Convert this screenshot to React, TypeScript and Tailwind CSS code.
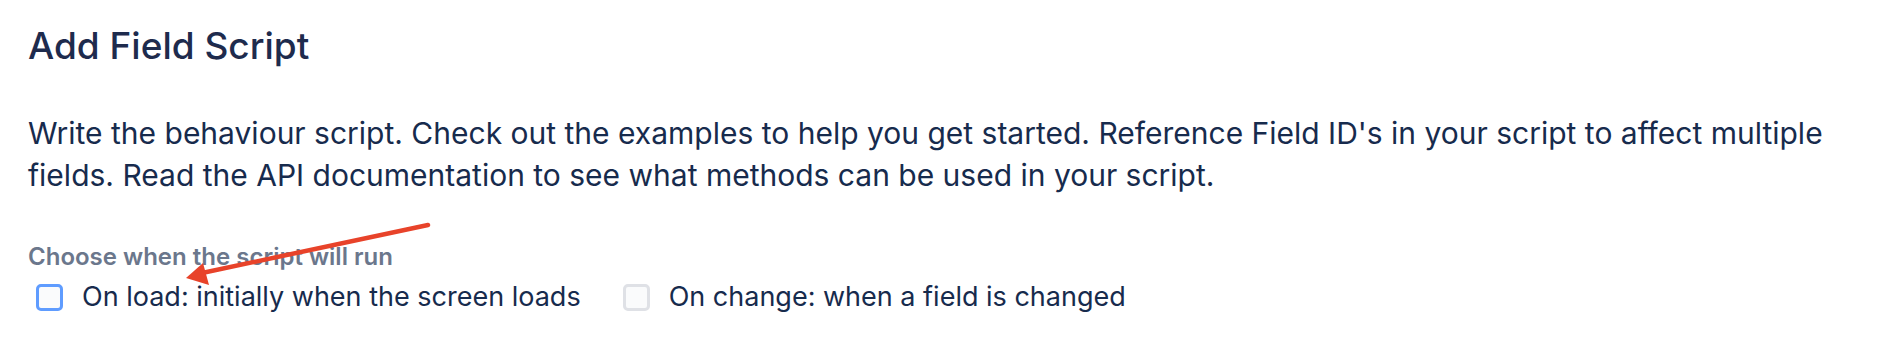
import React from "react";

const font = { fontFamily: "Inter, 'Noto Sans', sans-serif" };

function Checkbox({ focused, label }: { focused?: boolean; label: string }) {
  return (
    <label className="flex items-center">
      <span
        className={
          "ml-[8px] h-[27px] w-[27px] rounded-[5px] border-[3px] bg-[#fafbfc] " +
          (focused ? "border-[#5f9cff]" : "border-[#dfe1e6]")
        }
      />
      <span className="ml-[19px] text-[27px] leading-[40px] text-[#172b4d]">{label}</span>
    </label>
  );
}

export default function App() {
  return (
    <div className="relative h-[354px] w-[1886px] bg-white px-[28px] pt-[22px]" style={font}>
      <h1 className="text-[37px] font-medium leading-[48px] text-[#1e2b4d]">Add Field Script</h1>

      <p className="mt-[42px] text-[30px] leading-[42px] text-[#172b4d]">
        Write the behaviour script. Check out the examples to help you get started. Reference Field ID's in your
        script to affect multiple fields. Read the API documentation to see what methods can be used in your script.
      </p>

      <div className="mt-[45px] text-[24px] font-semibold leading-[32px] text-[#6b778c]">
        Choose when the script will run
      </div>

      <div className="mt-[4px] flex items-center gap-[34px]">
        <Checkbox focused label="On load: initially when the screen loads" />
        <Checkbox label="On change: when a field is changed" />
      </div>

      {/* annotation arrow */}
      <svg className="pointer-events-none absolute left-0 top-0" width="1886" height="354">
        <line x1="428" y1="225" x2="202" y2="273" stroke="#e8432a" strokeWidth="4.5" strokeLinecap="round" />
        <polygon points="186,278 203,263 209,285" fill="#e8432a" />
      </svg>
    </div>
  );
}
